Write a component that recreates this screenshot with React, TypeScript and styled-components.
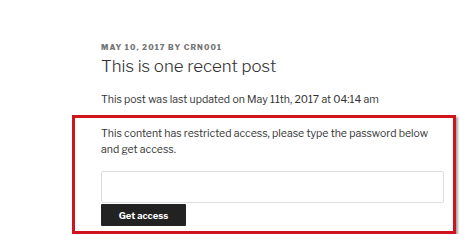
import React from "react";
import styled, { createGlobalStyle } from "styled-components";

const Global = createGlobalStyle`
  html, body { margin: 0; padding: 0; background: #fff; }
  body { font-family: "Libre Franklin", Inter, "Noto Sans", sans-serif; color: #333; }
`;

const Article = styled.article`
  padding: 43px 0 0 101px;
  width: 343px;
`;

const Meta = styled.div`
  font-size: 7.6px;
  font-weight: 800;
  letter-spacing: 0.14em;
  text-transform: uppercase;
  color: #767676;
  line-height: 10px;
`;

const Title = styled.h1`
  margin: 2px 0 0;
  font-size: 16.9px;
  font-weight: 300;
  line-height: 22px;
  color: #333;
`;

const Para = styled.p`
  margin: 0;
  font-size: 10.5px;
  line-height: 16px;
  color: #333;
`;

const Updated = styled(Para)`
  margin-top: 15px;
`;

const Restricted = styled.section`
  margin: 7px -12px 0 -29px;
  padding: 8px 9px 5px 26px;
  border: 3px solid #d0141c;
  box-shadow: 2px 2px 2px rgba(0, 0, 0, 0.35);
  background: #fff;
`;

const Form = styled.form`
  margin-top: 13px;
  display: flex;
  flex-direction: column;
  align-items: flex-start;
  gap: 1px;
`;

const Input = styled.input`
  box-sizing: border-box;
  width: 100%;
  height: 32px;
  border: 1px solid #ddd;
  border-radius: 2px;
  background: #fff;
  outline: none;
`;

const Button = styled.button`
  width: 85px;
  height: 22px;
  border: none;
  border-radius: 1px;
  background: #222;
  color: #fff;
  font-family: inherit;
  font-size: 9.4px;
  font-weight: 700;
  padding: 0;
  cursor: pointer;
`;

export default function App() {
  return (
    <>
      <Global />
      <Article>
        <Meta>May 10, 2017 by crn001</Meta>
        <Title>This is one recent post</Title>
        <Updated>This post was last updated on May 11th, 2017 at 04:14 am</Updated>
        <Restricted>
          <Para>
            This content has restricted access, please type the password below
            and get access.
          </Para>
          <Form onSubmit={(e) => e.preventDefault()}>
            <Input type="password" />
            <Button type="submit">Get access</Button>
          </Form>
        </Restricted>
      </Article>
    </>
  );
}
